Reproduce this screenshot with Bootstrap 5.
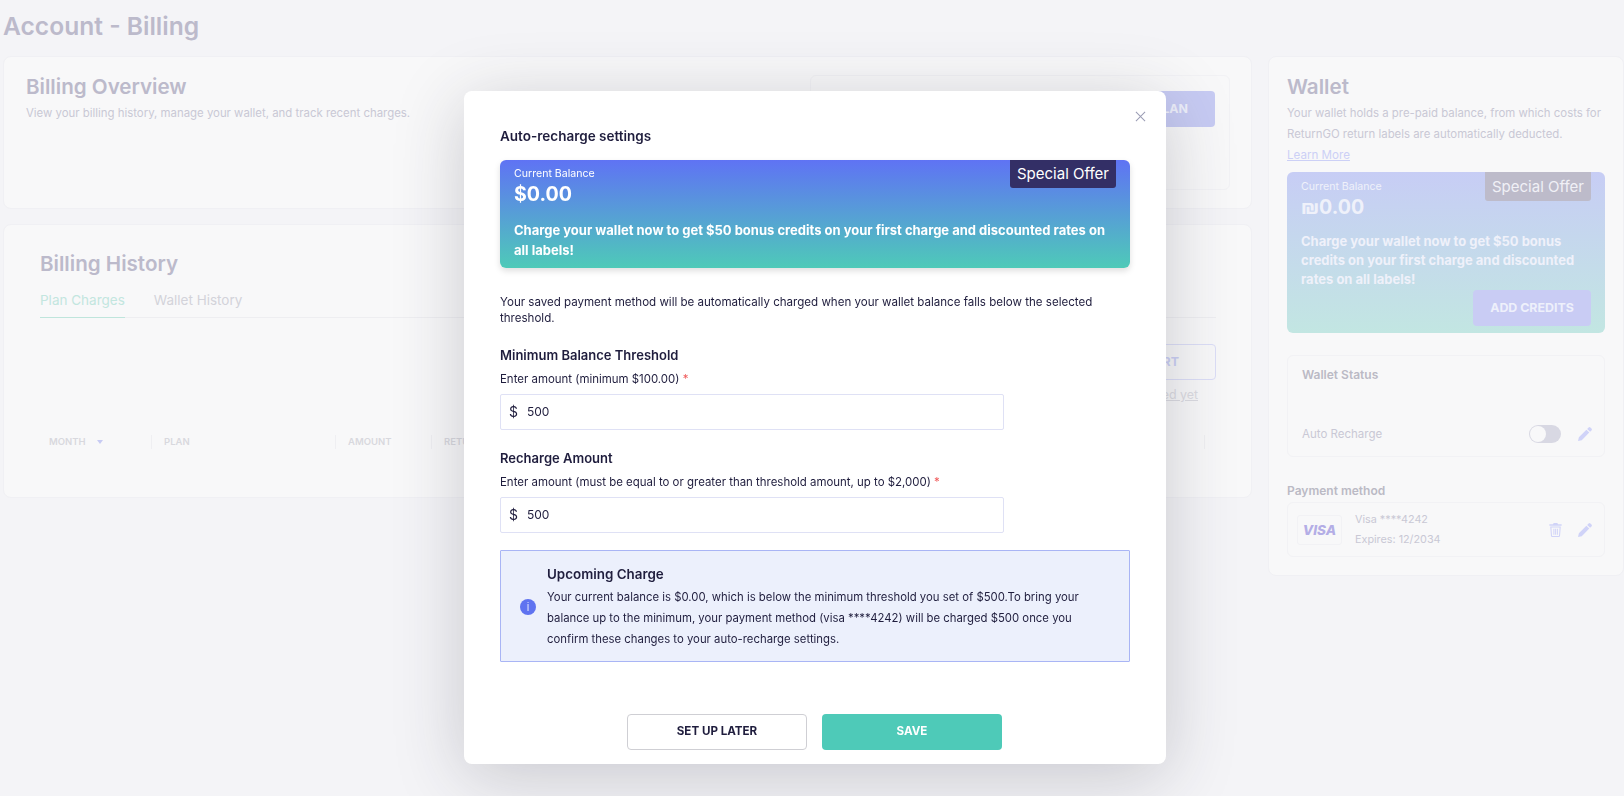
<!DOCTYPE html>
<html lang="en">
<head>
  <meta charset="UTF-8" />
  <meta name="viewport" content="width=device-width, initial-scale=1" />
  <title>Account - Billing</title>
  <link href="https://cdn.jsdelivr.net/npm/bootstrap@5.3.3/dist/css/bootstrap.min.css" rel="stylesheet" />
  <style>
    html, body { height: 796px; overflow: hidden; }
    body { background: #f4f4f7; font-family: Inter, "Open Sans", sans-serif; color: #c9c8d5; }

    /* page behind the dialog, already faded by the backdrop */
    .page-wrap { width: 1625px; padding: 0 0 0 3px; }
    .page-title { font-size: 24.6px; font-weight: 600; color: #bcbacb; line-height: 36px; margin: 8px 0 12px 0; }
    .pane { background: #f8f8f9; border: 1px solid #f0f0f4; border-radius: 8px; }
    .pane-left { width: 1249px; flex: none; }
    .pane-wallet { width: 356px; flex: none; margin-left: 16px; height: 520px; padding: 16px 18px; }
    .pane-over { height: 153px; padding: 16px 21px 18px 22px; margin-bottom: 15px; }
    .pane-hist { height: 274px; padding: 25px 35px 24px 36px; }
    .pane-head { font-size: 20.6px; font-weight: 600; color: #bcbacb; line-height: 28px; margin: 0; }
    .pane-desc { font-size: 11.4px; color: #c9c8d5; line-height: 21px; margin: 2px 0 0; }
    .over-box { width: 420px; height: 115px; margin-top: 2px; border: 1px solid #f2f2f5; border-radius: 6px; padding: 15px 14px; }
    .btn-faded { background: #c7cbf3; color: #eef0fb; border: 0; border-radius: 4px; font-size: 12.4px; font-weight: 700; height: 36px; padding: 0 27px; }
    .btn-faded-line { background: transparent; color: #ccd0f4; border: 1px solid #dcdef7; border-radius: 4px; font-size: 12.4px; font-weight: 700; height: 36px; width: 200px; padding: 0 36px 0 0; text-align: right; }
    .tab-row { border-bottom: 1px solid #eeeef1; margin-top: 12px; }
    .tab-item { font-size: 13.5px; line-height: 20px; color: #d3d3da; padding: 0 0 7px; margin-right: 29px; }
    .tab-item.on { color: #c3e6df; border-bottom: 1px solid #bfe5dc; margin-bottom: -1px; }
    .export-wrap { margin-top: 26px; }
    .none-yet { font-size: 12.4px; color: #dcdce2; text-decoration: underline; margin: 7px 18px 0 0; line-height: 16px; }
    .head-row { margin-top: 32px; height: 14px; }
    .head-cell { font-size: 9.5px; font-weight: 600; color: #d8d8de; line-height: 14px; text-transform: uppercase; padding-left: 12px; border-right: 1px solid #efeff2; }
    .head-cell:first-child { padding-left: 9px; }
    .caret-down { display: inline-block; width: 0; height: 0; border: 3px solid transparent; border-top: 4px solid #c7cbf3; border-bottom: 0; margin-left: 11px; vertical-align: 1px; }
    .learn-more { font-size: 11.6px; color: #ccd0f6; text-decoration: underline; line-height: 21px; display: block; }
    .promo-faded { position: relative; background: linear-gradient(180deg, #c7cdf5, #c2e6e2); border-radius: 6px; height: 161px; margin-top: 6px; padding: 8px 14px; color: #eff1fa; }
    .promo-label { font-size: 10.6px; line-height: 14px; }
    .promo-amount { font-size: 19.6px; font-weight: 700; line-height: 26px; }
    .promo-text { font-size: 13px; font-weight: 700; line-height: 19px; margin-top: 12px; }
    .offer-tag { position: absolute; top: 0; right: 14px; font-size: 15px; line-height: 29px; height: 29px; padding: 0; border-radius: 0 0 3px 3px; }
    .offer-tag-faded { width: 106px; background: #bdbbca; color: #f0f0f6; text-align: center; }
    .btn-add { position: absolute; right: 14px; bottom: 7px; width: 118px; padding: 0; background: #c9ccf4; }
    .sub-pane { border: 1px solid #f2f2f5; border-radius: 6px; }
    .status-pane { height: 102px; margin-top: 22px; padding: 10px 12px 10px 14px; }
    .sub-title { font-size: 12px; font-weight: 600; color: #bbbac5; line-height: 18px; }
    .sub-text { font-size: 11.5px; color: #c9c8d5; line-height: 20px; }
    .card-text-line { font-size: 10.8px; color: #c9c8d5; line-height: 20px; }
    .fake-switch { position: relative; width: 32px; height: 18px; background: #d8d8e3; border-radius: 9px; }
    .fake-switch::after { content: ""; position: absolute; left: 1px; top: 1px; width: 16px; height: 16px; border-radius: 50%; background: #f8f8f9; }
    .pay-pane { height: 55px; margin-top: 2px; padding: 0 12px 0 9px; }
    .visa-box { width: 45px; height: 30px; border: 1px solid #f2f2f5; border-radius: 3px; color: #b4aee6; font-size: 13.5px; font-weight: 800; font-style: italic; text-align: center; line-height: 28px; margin-right: 13px; }
    .ico-btn { fill: #d0d3f8; }

    /* dialog */
    .dialog-box.modal-dialog { max-width: 702px; width: 702px; margin: 91px 0 0 464px; }
    .dialog-box .modal-content { height: 673px; border: 0; border-radius: 8px; padding: 0 36px; box-shadow: 0 12px 70px rgba(40, 40, 60, .22); color: #1f1d3d; }
    .dialog-close { position: absolute; top: 19px; right: 20px; width: 12px; height: 12px; padding: 0; border: 0; background: none; line-height: 0; }
    .dialog-title { font-size: 13.5px; font-weight: 600; line-height: 20px; margin: 35px 0 14px; }
    .promo-main { position: relative; background: linear-gradient(180deg, #5f73f4, #4ecab8); border-radius: 6px; height: 108px; padding: 7px 14px; color: #fff; box-shadow: 0 3px 6px rgba(0, 0, 0, .13); }
    .offer-tag-main { width: 106px; height: 28px; line-height: 28px; background: #332f66; color: #fff; text-align: center; }
    .promo-main .promo-text { margin-top: 13px; line-height: 20px; }
    .dialog-note { font-size: 11.55px; line-height: 16px; margin: 26px 0 19px; }
    .field-title { font-size: 13px; font-weight: 600; line-height: 20px; margin: 0 0 5px; }
    .field-label { font-size: 11.45px; line-height: 18px; margin: 0 0 6px; }
    .req-star { color: #f05d5d; }
    .amount-group { width: 504px; height: 36px; border: 1px solid #dfe1f5; border-radius: 2px; margin-bottom: 18px; }
    .amount-group .input-group-text { background: none; border: 0; padding: 0 0 2px 8px; font-size: 14px; color: #1f1d3d; width: 27px; }
    .amount-group .form-control { border: 0; padding: 0 0 2px; font-size: 12px; color: #1f1d3d; height: 34px; box-shadow: none; }
    .charge-box { height: 112px; background: #ecf0fc; border: 1px solid #a9b5f5; border-radius: 1px; padding: 13px 30px 0 19px; margin-top: 17px; }
    .charge-icon { width: 16px; height: 16px; flex: none; border-radius: 50%; background: #5f73f0; color: #fff; font-size: 11px; font-weight: 300; line-height: 16px; text-align: center; margin: 35px 11px 0 0; }
    .charge-title { font-size: 13.4px; font-weight: 600; line-height: 20px; margin-bottom: 3px; }
    .charge-text { font-size: 11.35px; line-height: 21px; margin: 0; }
    .dialog-foot { gap: 15px; margin-top: 52px; padding-right: 1px; }
    .foot-btn { width: 180px; height: 36px; padding: 0; font-size: 11.6px; font-weight: 700; border-radius: 4px; }
    .btn-later { background: #fff; color: #1f1d3d; border: 1px solid #cfcfd4; }
    .btn-save { background: #4ecab8; color: #fff; border: 0; }
  </style>
</head>
<body>

  <div class="page-wrap">
    <div class="page-title">Account - Billing</div>
    <div class="d-flex">
      <div class="pane-left">
        <div class="pane pane-over d-flex justify-content-between">
          <div>
            <h2 class="pane-head">Billing Overview</h2>
            <p class="pane-desc">View your billing history, manage your wallet, and track recent charges.</p>
          </div>
          <div class="over-box text-end">
            <button class="btn btn-faded">CHANGE PLAN</button>
          </div>
        </div>
        <div class="pane pane-hist">
          <h2 class="pane-head">Billing History</h2>
          <div class="d-flex tab-row">
            <div class="tab-item on">Plan Charges</div>
            <div class="tab-item">Wallet History</div>
          </div>
          <div class="d-flex flex-column align-items-end export-wrap">
            <button class="btn btn-faded-line">EXPORT</button>
            <div class="none-yet">No reports generated yet</div>
          </div>
          <div class="d-flex head-row">
            <div class="head-cell" style="width: 112px">Month<span class="caret-down"></span></div>
            <div class="head-cell" style="width: 184px">Plan</div>
            <div class="head-cell" style="width: 96px">Amount</div>
            <div class="head-cell" style="width: 773px">Returns</div>
          </div>
        </div>
      </div>

      <div class="pane pane-wallet">
        <h2 class="pane-head">Wallet</h2>
        <p class="pane-desc">Your wallet holds a pre-paid balance, from which costs for ReturnGO return labels are automatically deducted.</p>
        <a class="learn-more">Learn More</a>
        <div class="promo-faded">
          <div class="offer-tag offer-tag-faded">Special Offer</div>
          <div class="promo-label">Current Balance</div>
          <div class="promo-amount">₪0.00</div>
          <div class="promo-text">Charge your wallet now to get $50 bonus credits on your first charge and discounted rates on all labels!</div>
          <button class="btn btn-faded btn-add">ADD CREDITS</button>
        </div>
        <div class="sub-pane status-pane">
          <div class="sub-title">Wallet Status</div>
          <div class="d-flex align-items-center justify-content-between" style="margin-top: 40px">
            <div class="sub-text">Auto Recharge</div>
            <div class="d-flex align-items-center" style="gap: 17px">
              <div class="fake-switch"></div>
              <svg class="ico-btn" width="14" height="14" viewBox="0 0 16 16"><path d="M12.1.6a1.5 1.5 0 0 1 2.1 0l1.2 1.2a1.5 1.5 0 0 1 0 2.1l-1.6 1.6-3.3-3.3zM9.6 3.1l3.3 3.3-8.6 8.6L0 16l1-4.3z"/></svg>
            </div>
          </div>
        </div>
        <div class="sub-title" style="margin-top: 25px">Payment method</div>
        <div class="sub-pane pay-pane d-flex align-items-center">
          <div class="visa-box">VISA</div>
          <div class="flex-grow-1">
            <div class="card-text-line">Visa ****4242</div>
            <div class="card-text-line">Expires: 12/2034</div>
          </div>
          <div class="d-flex align-items-center gap-3">
            <svg class="ico-btn" width="13" height="14" viewBox="0 0 14 16"><path d="M5 0h4l1 1.5h4V3H0V1.5h4zM1 4h12l-.8 10.6A1.5 1.5 0 0 1 10.7 16H3.3a1.5 1.5 0 0 1-1.5-1.4zm1.3 1.2.7 9.4c0 .1.1.2.3.2h7.4c.2 0 .3-.1.3-.2l.7-9.4zM4.6 6.5h1.1v7H4.6zm2 0h1.1v7H6.6zm2 0h1.1v7H8.6z"/></svg>
            <svg class="ico-btn" width="14" height="14" viewBox="0 0 16 16"><path d="M12.1.6a1.5 1.5 0 0 1 2.1 0l1.2 1.2a1.5 1.5 0 0 1 0 2.1l-1.6 1.6-3.3-3.3zM9.6 3.1l3.3 3.3-8.6 8.6L0 16l1-4.3z"/></svg>
          </div>
        </div>
      </div>
    </div>
  </div>

  <div class="modal d-block" tabindex="-1">
    <div class="modal-dialog dialog-box">
      <div class="modal-content">
        <button class="dialog-close" aria-label="Close">
          <svg width="11" height="11" viewBox="0 0 12 12"><path d="M1 1l10 10M11 1L1 11" stroke="#9a9cb4" stroke-width="1.1" fill="none"/></svg>
        </button>
        <div class="dialog-title">Auto-recharge settings</div>

        <div class="promo-main">
          <div class="offer-tag offer-tag-main">Special Offer</div>
          <div class="promo-label">Current Balance</div>
          <div class="promo-amount">$0.00</div>
          <div class="promo-text">Charge your wallet now to get $50 bonus credits on your first charge and discounted rates on all labels!</div>
        </div>

        <p class="dialog-note">Your saved payment method will be automatically charged when your wallet balance falls below the selected threshold.</p>

        <div class="field-title">Minimum Balance Threshold</div>
        <div class="field-label">Enter amount (minimum $100.00) <span class="req-star">*</span></div>
        <div class="input-group amount-group">
          <span class="input-group-text">$</span>
          <input class="form-control" type="text" value="500" />
        </div>

        <div class="field-title">Recharge Amount</div>
        <div class="field-label">Enter amount (must be equal to or greater than threshold amount, up to $2,000) <span class="req-star">*</span></div>
        <div class="input-group amount-group mb-0">
          <span class="input-group-text">$</span>
          <input class="form-control" type="text" value="500" />
        </div>

        <div class="charge-box d-flex">
          <div class="charge-icon">i</div>
          <div>
            <div class="charge-title">Upcoming Charge</div>
            <p class="charge-text">Your current balance is $0.00, which is below the minimum threshold you set of $500.To bring your balance up to the minimum, your payment method (visa ****4242) will be charged $500 once you confirm these changes to your auto-recharge settings.</p>
          </div>
        </div>

        <div class="d-flex justify-content-center dialog-foot">
          <button class="btn foot-btn btn-later">SET UP LATER</button>
          <button class="btn foot-btn btn-save">SAVE</button>
        </div>
      </div>
    </div>
  </div>

  <script src="https://cdn.jsdelivr.net/npm/bootstrap@5.3.3/dist/js/bootstrap.bundle.min.js"></script>
</body>
</html>
